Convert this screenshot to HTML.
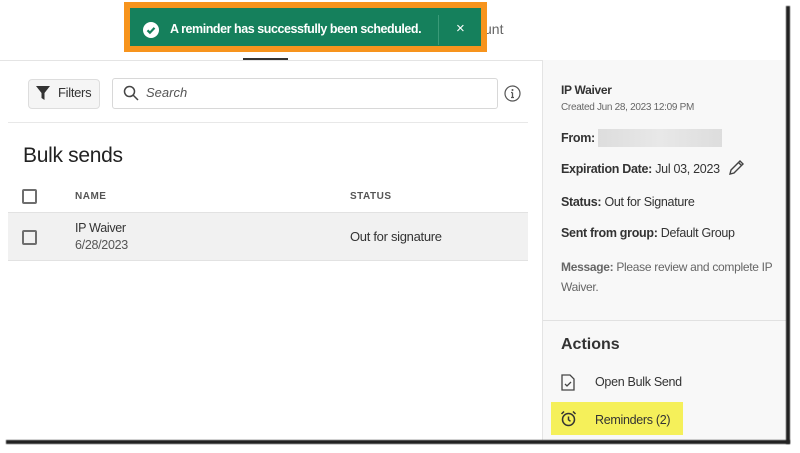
<!DOCTYPE html>
<html><head><style>
body{margin:0;width:800px;height:453px;background:#fff;font-family:"Liberation Sans",sans-serif;position:relative;overflow:hidden;color:#2c2c2c}
.a{position:absolute}
.shadow-b{left:6px;top:440px;width:784px;height:4px;background:#222;filter:blur(0.6px)}
.shadow-r{left:786px;top:6px;width:4px;height:438px;background:#222;filter:blur(0.6px)}
.cb{width:11px;height:11px;border:2px solid #6e6e6e;border-radius:2px}
.p{letter-spacing:-0.3px}
</style></head><body>
<div class="a" style="left:0;top:0;width:786px;height:440px;background:#fff"></div>
<div class="a" style="left:0;top:60px;width:543px;height:1px;background:#e4e4e4"></div>
<div class="a" style="left:243px;top:58px;width:45px;height:2px;background:#333"></div>
<div class="a" style="left:484px;top:21px;font-size:14px;color:#666">unt</div>
<!-- right panel -->
<div class="a" style="left:542px;top:60px;width:244px;height:380px;background:#f8f8f8;border-left:1px solid #e4e4e4"></div>
<div class="a" style="left:543px;top:320px;width:243px;height:1px;background:#e1e1e1"></div>
<!-- toast -->
<div class="a" style="left:124px;top:2px;width:363px;height:50px;background:#f7941d"></div>
<div class="a" style="left:130px;top:8px;width:351px;height:38px;background:#15805c"></div>
<div class="a" style="left:143px;top:22px;width:16px;height:16px;border-radius:50%;background:#fff"></div>
<svg class="a" style="left:143px;top:22px" width="16" height="16"><path d="M4.5 8.3l2.4 2.4 4.6-4.8" stroke="#15805c" stroke-width="2.2" fill="none"/></svg>
<div class="a" style="left:170px;top:22px;font-size:12.5px;font-weight:bold;color:#fff;letter-spacing:-0.45px">A reminder has successfully been scheduled.</div>
<div class="a" style="left:438px;top:15px;width:1px;height:30px;background:#3a9a78"></div>
<div class="a" style="left:456px;top:20px;font-size:15px;color:#fff">×</div>
<!-- filters -->
<div class="a" style="left:28px;top:79px;width:70px;height:28px;border:1px solid #ddd;border-radius:4px;background:#f5f5f5"></div>
<svg class="a" style="left:36px;top:85px" width="14" height="16"><path d="M0 1h14L8.5 8v7L5.5 13V8z" fill="#333"/></svg>
<div class="a p" style="left:58px;top:85px;font-size:13px;color:#333">Filters</div>
<div class="a" style="left:112px;top:78px;width:384px;height:29px;border:1px solid #d8d8d8;border-radius:3px"></div>
<svg class="a" style="left:123px;top:85px" width="16" height="16"><circle cx="6.5" cy="6.5" r="5" stroke="#444" stroke-width="1.5" fill="none"/><path d="M10 10l5 5" stroke="#444" stroke-width="1.5"/></svg>
<div class="a" style="left:146px;top:85px;font-size:13px;font-style:italic;color:#555">Search</div>
<svg class="a" style="left:504px;top:85px" width="17" height="17"><circle cx="8.5" cy="8.5" r="7.5" stroke="#555" stroke-width="1.2" fill="none"/><path d="M8.5 7.5v5M7 12.5h3M7 7.5h1.5" stroke="#555" stroke-width="1.3"/><circle cx="8.5" cy="5" r="1" fill="#555"/></svg>
<div class="a" style="left:8px;top:122px;width:520px;height:1px;background:#e8e8e8"></div>
<div class="a p" style="left:23px;top:144px;font-size:21px;color:#222">Bulk sends</div>
<div class="a cb" style="left:22px;top:189px"></div>
<div class="a" style="left:75px;top:191px;font-size:10px;font-weight:bold;color:#555;letter-spacing:0.5px">NAME</div>
<div class="a" style="left:350px;top:191px;font-size:10px;font-weight:bold;color:#555;letter-spacing:0.5px">STATUS</div>
<div class="a" style="left:8px;top:212px;width:520px;height:47px;background:#f1f1f1;border-top:1px solid #e2e2e2;border-bottom:1px solid #e2e2e2"></div>
<div class="a cb" style="left:22px;top:230px"></div>
<div class="a p" style="left:75px;top:221px;font-size:12.5px;color:#333">IP Waiver</div>
<div class="a p" style="left:75px;top:238px;font-size:12.5px;color:#555">6/28/2023</div>
<div class="a p" style="left:350px;top:229px;font-size:13px;color:#333">Out for signature</div>
<!-- panel text -->
<div class="a p" style="left:561px;top:83px;font-size:12px;font-weight:bold;color:#333">IP Waiver</div>
<div class="a p" style="left:561px;top:102px;font-size:10px;color:#666">Created Jun 28, 2023 12:09 PM</div>
<div class="a p" style="left:561px;top:131px;font-size:12.5px;color:#333"><b>From:</b></div>
<div class="a" style="left:598px;top:129px;width:124px;height:18px;background:linear-gradient(90deg,#ddd,#e8e8e8,#ddd)"></div>
<div class="a p" style="left:561px;top:162px;font-size:12.5px;color:#333"><b>Expiration Date:</b> Jul 03, 2023</div>
<svg class="a" style="left:728px;top:159px" width="17" height="17"><path d="M2 15l1-4L12 2l3 3-9 9z M10.5 3.5l3 3" stroke="#444" stroke-width="1.4" fill="none"/></svg>
<div class="a p" style="left:561px;top:195px;font-size:12.5px;color:#333"><b>Status:</b> Out for Signature</div>
<div class="a p" style="left:561px;top:226px;font-size:12.5px;color:#333"><b>Sent from group:</b> Default Group</div>
<div class="a p" style="left:561px;top:257px;width:226px;font-size:12px;line-height:20px;color:#666"><b>Message:</b> Please review and complete IP Waiver.</div>
<div class="a" style="left:561px;top:336px;font-size:16px;font-weight:bold;color:#333">Actions</div>
<svg class="a" style="left:561px;top:374px" width="14" height="17"><path d="M1 1h8l4 4v11H1z" stroke="#444" stroke-width="1.3" fill="none"/><path d="M4 10l2 2 4-4" stroke="#444" stroke-width="1.3" fill="none"/></svg>
<div class="a p" style="left:595px;top:375px;font-size:12.5px;color:#333">Open Bulk Send</div>
<div class="a" style="left:551px;top:402px;width:132px;height:33px;background:#f5f05a"></div>
<svg class="a" style="left:560px;top:410px" width="17" height="17"><circle cx="8.5" cy="9.5" r="6" stroke="#333" stroke-width="1.5" fill="none"/><path d="M8.5 6.5v3.3l2 1.5M1.5 4L4 1.5M15.5 4L13 1.5" stroke="#333" stroke-width="1.5" fill="none"/></svg>
<div class="a p" style="left:595px;top:413px;font-size:12.5px;color:#333">Reminders (2)</div>
<div class="a shadow-b"></div><div class="a shadow-r"></div>
</body></html>
